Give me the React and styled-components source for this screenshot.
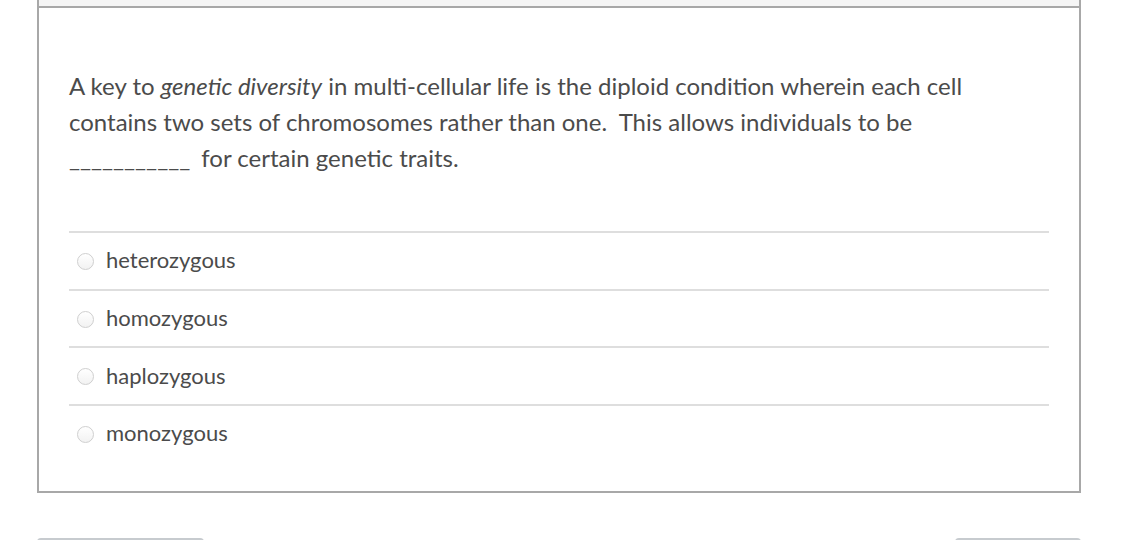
import React from 'react';
import styled, { createGlobalStyle } from 'styled-components';

const GlobalStyle = createGlobalStyle`
  body {
    margin: 0;
    background: #fff;
    font-family: Lato, "Open Sans", sans-serif;
    color: #4b4b4b;
    overflow: hidden;
  }
`;

const Page = styled.div`
  padding-left: 37px;
  width: 1044px;
`;

const Card = styled.div`
  border: 2px solid #a8a8a8;
  border-top: none;
`;

const CardHeader = styled.div`
  height: 6px;
  background: #f5f5f5;
  border-bottom: 2px solid #a8a8a8;
`;

const CardBody = styled.div`
  padding: 60px 30px 29px 30px;
`;

const Question = styled.p`
  margin: 0 0 55px 0;
  font-size: 24px;
  line-height: 36px;
`;

const Blank = styled.span`
  margin-right: 5px;
`;

const Answers = styled.div`
  display: flex;
  flex-direction: column;
`;

const Answer = styled.label`
  display: flex;
  align-items: center;
  gap: 12px;
  height: 55.7px;
  box-sizing: content-box;
  border-top: 2px solid #dedede;
  padding: 0 0 0 8px;
  font-size: 22px;
  line-height: 24px;
  cursor: pointer;
`;

const Label = styled.span`
  margin-bottom: 1px;
`;

const Radio = styled.span`
  width: 15px;
  height: 15px;
  border-radius: 50%;
  border: 1px solid #cfcfcf;
  background: linear-gradient(#ffffff, #f2f2f2);
  margin-top: 1px;
  flex: none;
`;

const Footer = styled.div`
  display: flex;
  justify-content: space-between;
  margin-top: 45px;
`;

const NavButton = styled.div`
  width: ${(p) => p.$w}px;
  height: 30px;
  background: #c7cbcf;
  border-radius: 4px;
`;

const options = ['heterozygous', 'homozygous', 'haplozygous', 'monozygous'];

export default function App() {
  return (
    <Page>
      <GlobalStyle />
      <Card>
        <CardHeader />
        <CardBody>
          <Question>
            A key to <em>genetic diversity</em> in multi-cellular life is the diploid condition wherein each cell
            contains two sets of chromosomes rather than one.&nbsp; This allows individuals to be
            <br />
            <Blank>___________</Blank> for certain genetic traits.
          </Question>
          <Answers>
            {options.map((o) => (
              <Answer key={o}>
                <Radio />
                <Label>{o}</Label>
              </Answer>
            ))}
          </Answers>
        </CardBody>
      </Card>
      <Footer>
        <NavButton $w={167} />
        <NavButton $w={126} />
      </Footer>
    </Page>
  );
}
